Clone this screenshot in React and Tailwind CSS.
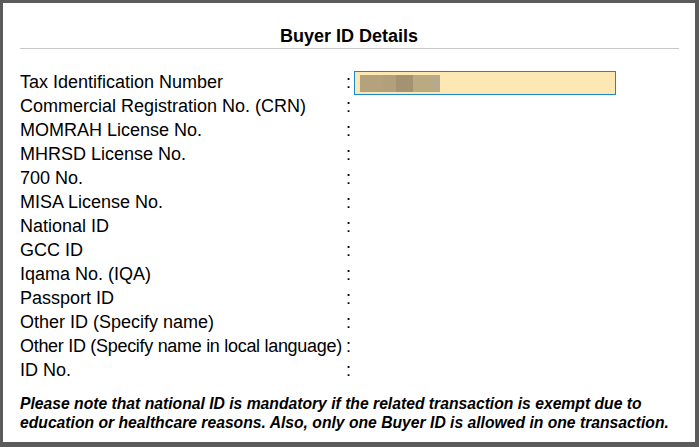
const fields = [
  "Tax Identification Number",
  "Commercial Registration No. (CRN)",
  "MOMRAH License No.",
  "MHRSD License No.",
  "700 No.",
  "MISA License No.",
  "National ID",
  "GCC ID",
  "Iqama No. (IQA)",
  "Passport ID",
  "Other ID (Specify name)",
  "Other ID (Specify name in local language)",
  "ID No.",
];

const App = () => {
  return (
    <div className="w-[699px] h-[447px] bg-[#5b5b5b] pt-[3px] pl-[3px] pr-[4px] pb-[5px] font-['Liberation_Sans',Arial,sans-serif] text-black">
      <div className="h-full bg-white">
        {/* Title */}
        <div className="pt-[21px] text-center text-[18px] leading-[24px] font-bold">Buyer ID Details</div>
        <div className="ml-[17px] mr-[16px] border-t border-[#c8c8c8]" />

        {/* Fields */}
        <div className="mt-[21px] pl-[17px]">
          {fields.map((label, i) => (
            <div key={label} className="flex h-[24px] text-[18px] leading-[24px]">
              <div className={i === 11 ? "w-[326px] whitespace-nowrap tracking-[-0.3px]" : "w-[326px] whitespace-nowrap"}>
                {label}
              </div>
              <div className="w-[8px]">:</div>
              {i === 0 && (
                <div className="mt-[1px] h-[24px] w-[262px] border border-[#1a88c9] bg-[#fde7b3] flex items-center pl-[5px]">
                  <div className="flex h-[17px]">
                    <div className="w-[23px] bg-[#b4a27c]" />
                    <div className="w-[13px] bg-[#b1a07b]" />
                    <div className="w-[17px] bg-[#a39372]" />
                    <div className="w-[19px] bg-[#b9aa81]" />
                    <div className="w-[8px] bg-[#b6aa88]" />
                  </div>
                </div>
              )}
            </div>
          ))}
        </div>

        {/* Note */}
        <p className="mt-[12px] pl-[17px] text-[15.7px] leading-[19px] font-bold italic whitespace-nowrap">
          Please note that national ID is mandatory if the related transaction is exempt due to
          <br />
          education or healthcare reasons. Also, only one Buyer ID is allowed in one transaction.
        </p>
      </div>
    </div>
  );
};

export default App;
